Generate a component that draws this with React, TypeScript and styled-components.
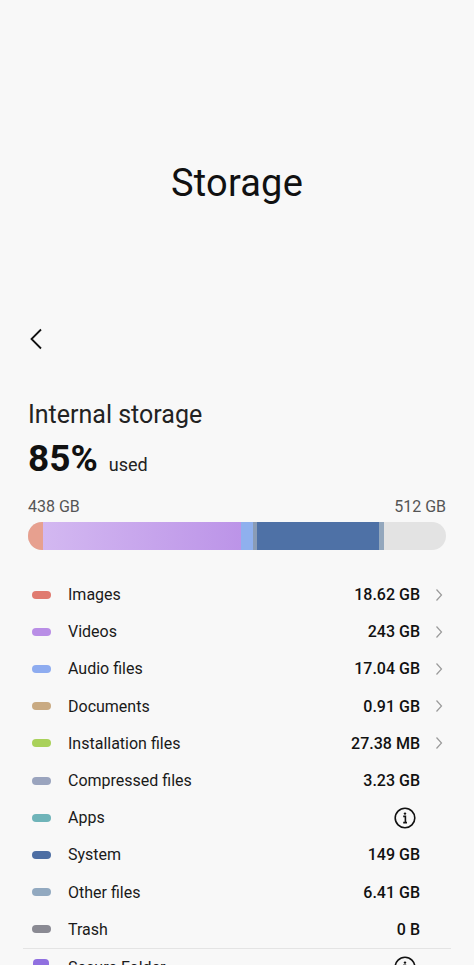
import React from "react";
import styled, { createGlobalStyle } from "styled-components";

const Global = createGlobalStyle`
  html, body { margin: 0; padding: 0; background: #f8f8f8; }
  body { font-family: Roboto, "Noto Sans", Arial, sans-serif; color: #111; overflow: hidden; }
`;

const Page = styled.div`
  width: 474px;
  height: 965px;
  background: #f8f8f8;
  overflow: hidden;
`;

const Header = styled.header`
  height: 311px;
  padding-top: 54px;
  box-sizing: border-box;
  display: flex;
  align-items: center;
  justify-content: center;
`;

const Title = styled.h1`
  margin: 0;
  font-size: 38px;
  font-weight: 400;
  letter-spacing: 0.2px;
  color: #111;
`;

const Toolbar = styled.div`
  height: 56px;
  display: flex;
  align-items: center;
  padding-left: 26px;
`;

const BackButton = styled.button`
  border: 0;
  background: none;
  padding: 0;
  width: 20px;
  height: 24px;
  display: flex;
  align-items: center;
  justify-content: center;
`;

const Content = styled.main`
  padding: 0 28px;
`;

const Heading = styled.div`
  margin-top: 32px;
  font-size: 25px;
  line-height: 32px;
  font-weight: 400;
  color: #222;
`;

const UsageLine = styled.div`
  display: flex;
  align-items: baseline;
  gap: 11px;
  margin-top: 4px;
  line-height: 48px;
`;

const Percent = styled.span`
  font-size: 37px;
  font-weight: 700;
  color: #111;
`;

const Used = styled.span`
  font-size: 18px;
  color: #222;
`;

const Scale = styled.div`
  display: flex;
  justify-content: space-between;
  font-size: 16px;
  line-height: 20px;
  color: #555;
  margin-top: 8px;
`;

const Bar = styled.div`
  display: flex;
  height: 28px;
  border-radius: 14px;
  overflow: hidden;
  background: #e3e3e3;
  margin-top: 5px;
`;

const Segment = styled.div<{ $bg: string }>`
  height: 100%;
  flex: none;
  background: ${(p) => p.$bg};
`;

const List = styled.ul<{ $top?: number }>`
  list-style: none;
  margin: ${(p) => p.$top ?? 0}px 0 0;
  padding: 0;
`;

const Row = styled.li`
  display: flex;
  align-items: center;
  height: 37.2px;
`;

const Dot = styled.span<{ $color: string }>`
  width: 19px;
  height: 8px;
  border-radius: 4px;
  background: ${(p) => p.$color};
  margin-left: 4px;
  margin-right: 17px;
  flex: none;
`;

const Square = styled.span<{ $color: string }>`
  width: 16px;
  height: 16px;
  border-radius: 4px;
  background: ${(p) => p.$color};
  margin-left: 5px;
  margin-right: 19px;
  flex: none;
`;

const Label = styled.span`
  flex: 1;
  font-size: 16px;
  color: #1a1a1a;
`;

const Value = styled.span`
  font-size: 16px;
  font-weight: 500;
  color: #111;
`;

const Trail = styled.span`
  width: 26px;
  display: flex;
  justify-content: flex-end;
  padding-right: 3px;
  box-sizing: border-box;
  flex: none;
`;

const InfoWrap = styled.span`
  display: flex;
  margin-right: 4px;
`;

const Divider = styled.hr`
  border: 0;
  border-top: 1px solid #e4e4e4;
  margin: 0 -5px;
`;

const Chevron = () => (
  <svg width="8" height="14" viewBox="0 0 8 14" fill="none">
    <path d="M1.5 1.5 L6.5 7 L1.5 12.5" stroke="#9a9a9a" strokeWidth="1.2" />
  </svg>
);

const Info = () => (
  <svg width="22" height="22" viewBox="0 0 22 22" fill="none">
    <circle cx="11" cy="11" r="9.8" stroke="#111" strokeWidth="1.6" />
    <circle cx="11" cy="6.6" r="1.2" fill="#111" />
    <path d="M9.2 9.4 H11.4 V15.6 M9.2 15.6 H13" stroke="#111" strokeWidth="1.6" />
  </svg>
);

type Item = { label: string; color: string; value?: string; chevron?: boolean; info?: boolean };

const items: Item[] = [
  { label: "Images", color: "#e07a6f", value: "18.62 GB", chevron: true },
  { label: "Videos", color: "#b98ee6", value: "243 GB", chevron: true },
  { label: "Audio files", color: "#8eacf0", value: "17.04 GB", chevron: true },
  { label: "Documents", color: "#c9aa82", value: "0.91 GB", chevron: true },
  { label: "Installation files", color: "#a9d15a", value: "27.38 MB", chevron: true },
  { label: "Compressed files", color: "#9aa4be", value: "3.23 GB" },
  { label: "Apps", color: "#6fb4b9", info: true },
  { label: "System", color: "#4d6ea3", value: "149 GB" },
  { label: "Other files", color: "#92a9c0", value: "6.41 GB" },
  { label: "Trash", color: "#8a8a93", value: "0 B" },
];

const segments = [
  { w: 15, bg: "#e7a08f" },
  { w: 198, bg: "linear-gradient(90deg, #d3b8f1, #bc94e8)" },
  { w: 12, bg: "#8fb0ee" },
  { w: 4, bg: "#8a9cb6" },
  { w: 122, bg: "#4e71a6" },
  { w: 5, bg: "#93a7bd" },
];

export default function App() {
  return (
    <Page>
      <Global />
      <Header>
        <Title>Storage</Title>
      </Header>
      <Toolbar>
        <BackButton aria-label="Back">
          <svg width="14" height="22" viewBox="0 0 14 22" fill="none">
            <path d="M12 1.5 L2.5 11 L12 20.5" stroke="#111" strokeWidth="1.8" />
          </svg>
        </BackButton>
      </Toolbar>
      <Content>
        <Heading>Internal storage</Heading>
        <UsageLine>
          <Percent>85%</Percent>
          <Used>used</Used>
        </UsageLine>
        <Scale>
          <span>438 GB</span>
          <span>512 GB</span>
        </Scale>
        <Bar>
          {segments.map((s, i) => (
            <Segment key={i} $bg={s.bg} style={{ width: s.w }} />
          ))}
        </Bar>
        <List $top={26}>
          {items.map((it) => (
            <Row key={it.label}>
              <Dot $color={it.color} />
              <Label>{it.label}</Label>
              {it.info ? (
                <InfoWrap>
                  <Info />
                </InfoWrap>
              ) : (
                <Value>{it.value}</Value>
              )}
              <Trail>{it.chevron ? <Chevron /> : null}</Trail>
            </Row>
          ))}
        </List>
        <Divider />
        <List>
          <Row>
            <Square $color="#9070e0" />
            <Label>Secure Folder</Label>
            <InfoWrap>
              <Info />
            </InfoWrap>
            <Trail />
          </Row>
        </List>
      </Content>
    </Page>
  );
}
